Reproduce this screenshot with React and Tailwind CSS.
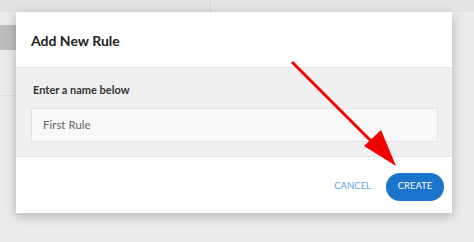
export default function App() {
  return (
    <div className="relative w-[474px] h-[242px] overflow-hidden bg-[#ebebeb] font-['Lato',sans-serif]">
      {/* page behind the dialog */}
      <div className="flex h-[12px]">
        <div className="w-[210px] bg-[#e2e2e2]" />
        <div className="w-px bg-[#d4d4d4]" />
        <div className="flex-1 bg-[#e4e4e4]" />
      </div>
      <div className="mt-[13px] h-[25px] w-[16px] bg-[#bdbdbd]" />
      <div className="mt-[45px] h-px w-[16px] bg-[#dcdcdc]" />

      {/* dialog */}
      <div className="absolute left-[16px] top-[12px] w-[436px] h-[201px] flex flex-col bg-white shadow-[0_3px_10px_rgba(0,0,0,0.25)]">
        <div className="h-[56px] flex items-center px-[15px] pt-[1px] border-b border-[#e4e4e4]">
          <h1 className="text-[14px] font-bold text-[#222]">Add New Rule</h1>
        </div>
        <div className="h-[89px] bg-[#f0f0f0] px-[15px] pt-[14px] border-b border-[#e2e2e2]">
          <div className="pl-[2px] text-[11px] font-bold text-[#333]">Enter a name below</div>
          <div className="mt-[9px] h-[34px] w-[407px] flex items-center px-[11px] bg-[#f8f8f8] border border-[#e2e2e2] text-[11.5px] text-[#666]">
            First Rule
          </div>
        </div>
        <div className="flex-1 flex items-center justify-end gap-[15px] pr-[8px] pt-[3px]">
          <button className="text-[9.5px] text-[#5fa4dc]">CANCEL</button>
          <button className="h-[28px] w-[58px] rounded-full bg-[#1a74cc] text-[9.5px] text-white">CREATE</button>
        </div>
      </div>

      {/* red arrow */}
      <svg className="absolute left-0 top-0" width="474" height="242" viewBox="0 0 474 242">
        <line x1="292" y1="62" x2="372" y2="142" stroke="#f20000" strokeWidth="3" />
        <polygon points="396,166 364,146 381,130" fill="#f20000" />
      </svg>
    </div>
  );
}
